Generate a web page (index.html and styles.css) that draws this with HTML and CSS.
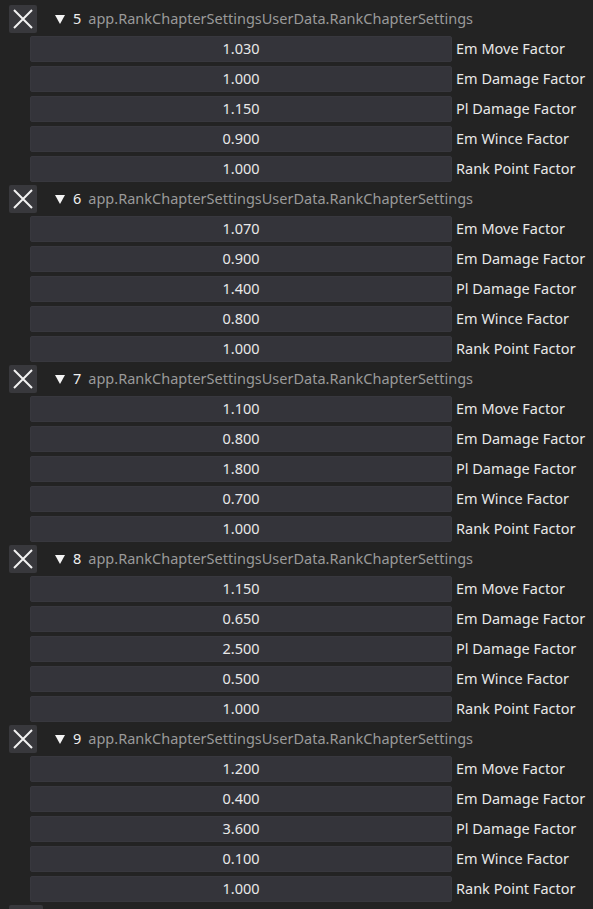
FILE: index.html
```html
<!DOCTYPE html>
<html>
<head>
<meta charset="utf-8">
<link rel="stylesheet" href="styles.css">
</head>
<body>
<div class="list" id="list"></div>
<div class="tail"></div>
<script>
const data = [
  [5, ["1.030","1.000","1.150","0.900","1.000"]],
  [6, ["1.070","0.900","1.400","0.800","1.000"]],
  [7, ["1.100","0.800","1.800","0.700","1.000"]],
  [8, ["1.150","0.650","2.500","0.500","1.000"]],
  [9, ["1.200","0.400","3.600","0.100","1.000"]]
];
const labels = ["Em Move Factor","Em Damage Factor","Pl Damage Factor","Em Wince Factor","Rank Point Factor"];
const list = document.getElementById('list');
let html = '';
for (const [n, vals] of data) {
  html += '<div class="group"><div class="head">' +
    '<div class="xbtn"><svg width="20" height="20" viewBox="0 0 20 20"><path d="M1 1L19 19M19 1L1 19" stroke="#f2f2f2" stroke-width="2"/></svg></div>' +
    '<span class="tri"></span><span class="num">' + n + '</span>' +
    '<span class="type">app.RankChapterSettingsUserData.RankChapterSettings</span></div>';
  vals.forEach((v, i) => {
    html += '<div class="row"><div class="input">' + v + '</div><span class="label">' + labels[i] + '</span></div>';
  });
  html += '</div>';
}
list.innerHTML = html;
</script>
</body>
</html>
```
FILE: styles.css
```css
html, body {
  margin: 0;
  padding: 0;
  background: #232323;
  overflow: hidden;
}
body {
  font-family: "Noto Sans", "Open Sans", sans-serif;
  font-size: 14.5px;
  color: #e8e8e8;
}
.list {
  padding-top: 4px;
}
.head {
  height: 30px;
  display: flex;
  align-items: center;
}
.xbtn {
  width: 28px;
  height: 28px;
  margin-left: 9px;
  background: #38383c;
  border-radius: 2px;
  display: flex;
  align-items: center;
  justify-content: center;
}
.tri {
  width: 0;
  height: 0;
  margin-left: 18px;
  border-left: 5px solid transparent;
  border-right: 5px solid transparent;
  border-top: 9px solid #f4f4f4;
}
.num {
  margin-left: 8px;
  color: #f0f0f0;
  line-height: 26px;
  padding-bottom: 2px;
}
.type {
  margin-left: 7px;
  color: #9a9a9a;
  line-height: 26px;
  padding-bottom: 2px;
}
.row {
  height: 30px;
  display: flex;
  align-items: center;
  padding-left: 30px;
}
.input {
  width: 420px;
  height: 24px;
  line-height: 22px;
  background: #34343a;
  border: 1px solid #38383e;
  border-radius: 2px;
  text-align: center;
  color: #e8e8e8;
}
.label {
  margin-left: 4px;
  color: #e8e8e8;
  line-height: 26px;
  padding-bottom: 2px;
}
.tail {
  margin-left: 9px;
  margin-top: 1px;
  width: 34px;
  height: 10px;
  background: #38383c;
  border-radius: 2px;
}
```
